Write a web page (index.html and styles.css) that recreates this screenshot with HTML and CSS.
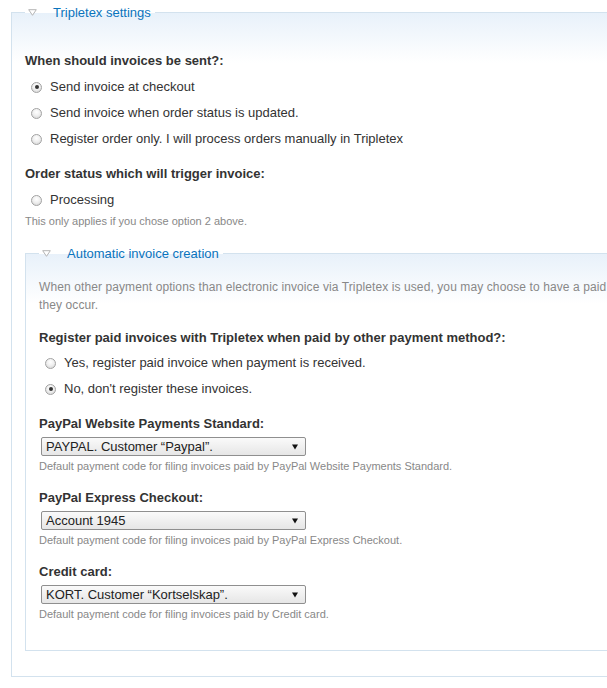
FILE: index.html
```html
<!DOCTYPE html>
<html>
<head>
<meta charset="utf-8">
<link rel="stylesheet" href="styles.css">
</head>
<body>
<div class="page">
  <fieldset class="box outer">
    <legend class="legend"><svg class="tri" width="9" height="7" viewBox="0 0 9 7"><path d="M0.7 0.7 H8.3 L4.5 6.3 Z" fill="#fff" stroke="#b4b4b4" stroke-width="1"/></svg><span class="legend-text">Tripletex settings</span></legend>

    <div class="label first">When should invoices be sent?:</div>
    <div class="radios">
      <div class="radio-row"><span class="radio checked"></span><span>Send invoice at checkout</span></div>
      <div class="radio-row"><span class="radio"></span><span>Send invoice when order status is updated.</span></div>
      <div class="radio-row"><span class="radio"></span><span>Register order only. I will process orders manually in Tripletex</span></div>
    </div>

    <div class="label gap-lg">Order status which will trigger invoice:</div>
    <div class="radios">
      <div class="radio-row"><span class="radio"></span><span>Processing</span></div>
    </div>
    <div class="desc small">This only applies if you chose option 2 above.</div>

    <fieldset class="box inner">
      <legend class="legend"><svg class="tri" width="9" height="7" viewBox="0 0 9 7"><path d="M0.7 0.7 H8.3 L4.5 6.3 Z" fill="#fff" stroke="#b4b4b4" stroke-width="1"/></svg><span class="legend-text">Automatic invoice creation</span></legend>

      <p class="intro">When other payment options than electronic invoice via Tripletex is used, you may choose to have a paid invoice registered when<br>they occur.</p>

      <div class="label gap-md">Register paid invoices with Tripletex when paid by other payment method?:</div>
      <div class="radios tight">
        <div class="radio-row"><span class="radio"></span><span>Yes, register paid invoice when payment is received.</span></div>
        <div class="radio-row"><span class="radio checked"></span><span>No, don't register these invoices.</span></div>
      </div>

      <div class="field">
        <div class="label">PayPal Website Payments Standard:</div>
        <div class="select"><span>PAYPAL. Customer “Paypal”.</span><svg class="arrow" width="6" height="6" viewBox="0 0 6 6"><path d="M0 0.5 H6 L3 5.5 Z" fill="#111"/></svg></div>
        <div class="desc">Default payment code for filing invoices paid by PayPal Website Payments Standard.</div>
      </div>

      <div class="field">
        <div class="label">PayPal Express Checkout:</div>
        <div class="select"><span>Account 1945</span><svg class="arrow" width="6" height="6" viewBox="0 0 6 6"><path d="M0 0.5 H6 L3 5.5 Z" fill="#111"/></svg></div>
        <div class="desc">Default payment code for filing invoices paid by PayPal Express Checkout.</div>
      </div>

      <div class="field">
        <div class="label">Credit card:</div>
        <div class="select"><span>KORT. Customer “Kortselskap”.</span><svg class="arrow" width="6" height="6" viewBox="0 0 6 6"><path d="M0 0.5 H6 L3 5.5 Z" fill="#111"/></svg></div>
        <div class="desc">Default payment code for filing invoices paid by Credit card.</div>
      </div>
    </fieldset>
  </fieldset>
</div>
</body>
</html>
```

FILE: styles.css
```css
html {
  overflow: hidden;
  background: #fff;
}
body {
  margin: 0;
  font-family: "Liberation Sans", Arial, sans-serif;
  font-size: 13px;
  color: #333;
}
.page {
  padding: 2px 0 0 11px;
  width: 1100px;
}
.box {
  margin: 0;
  border: 1px solid #d3e2ee;
  background: linear-gradient(to bottom, #e8f1fa 0px, #ffffff 50px);
  min-width: 0;
}
.outer {
  width: 1000px;
  padding: 30px 0 25px 13px;
}
.inner {
  width: 940px;
  margin-top: 14px;
  padding: 15px 0 28px 13px;
}
.legend {
  padding: 0 4px 0 3px;
  line-height: 20px;
  height: 20px;
  display: flex;
  align-items: center;
}
.tri {
  display: block;
  margin-right: 16px;
}
.legend-text {
  color: #0a74bd;
  font-size: 13px;
  padding-top: 1px;
}
.label {
  font-weight: bold;
  line-height: 18px;
  color: #333;
}
.gap-lg { margin-top: 17px; }
.gap-md { margin-top: 15px; }
.radios {
  display: flex;
  flex-direction: column;
  gap: 8px;
  margin-top: 8px;
}
.radios.tight { margin-top: 7px; }
.radio-row {
  display: flex;
  align-items: center;
  line-height: 18px;
  padding-left: 6px;
  color: #333;
}
.radio {
  width: 11px;
  height: 11px;
  box-sizing: border-box;
  border: 1px solid #a2a2a2;
  border-radius: 50%;
  background: radial-gradient(circle at 50% 35%, #ffffff 0%, #f0f0f0 45%, #d0d0d0 100%);
  margin-right: 8px;
  position: relative;
  flex: none;
}
.radio.checked::after {
  content: "";
  position: absolute;
  left: 2.5px;
  top: 2.5px;
  width: 4px;
  height: 4px;
  border-radius: 50%;
  background: #333;
}
.desc {
  font-size: 11px;
  line-height: 16px;
  color: #888;
  margin-top: 2px;
}
.desc.small {
  margin-top: 4px;
}
.intro {
  margin: 0;
  font-size: 12px;
  line-height: 18px;
  letter-spacing: 0.1px;
  color: #888;
}
.field {
  margin-top: 17px;
}
.field + .field {
  margin-top: 15px;
}
.select {
  margin: 4px 0 0 2px;
  width: 265px;
  height: 19px;
  box-sizing: border-box;
  border: 1px solid #8f8f8f;
  border-radius: 2px;
  background: linear-gradient(to bottom, #fafafa, #e6e6e6);
  display: flex;
  align-items: center;
  justify-content: space-between;
  padding: 0 7px 0 4px;
  font-size: 13px;
  color: #222;
}
.arrow {
  display: block;
}
```
